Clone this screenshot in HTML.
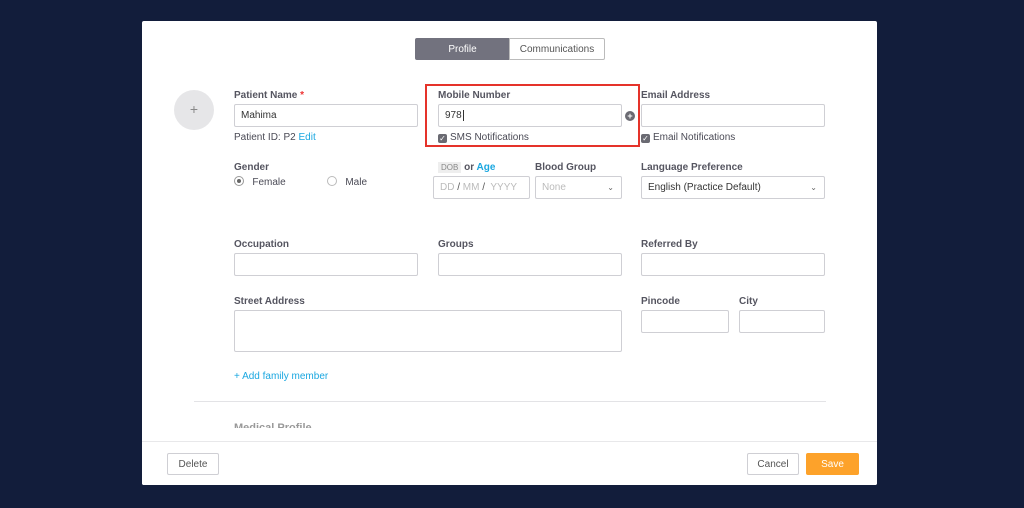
<!DOCTYPE html>
<html><head><style>
*{box-sizing:border-box;margin:0;padding:0}
body{width:1024px;height:508px;background:#121d3b;font-family:"Liberation Sans",sans-serif;position:relative;overflow:hidden;color:#4a4a55}
.m{position:absolute;left:142px;top:21px;width:735px;height:464px;background:#fff;border-radius:2px;overflow:hidden}
.a{position:absolute}
.l{position:absolute;font-size:10px;font-weight:bold;color:#555560}
.i{position:absolute;border:1px solid #cfcfd4;border-radius:2px;height:23px;background:#fff;font-size:10px;padding:0 6px;line-height:21px;color:#333}
.t{position:absolute;font-size:10px;color:#4a4a55}
.cb{display:inline-block;width:9px;height:9px;background:#6a6a72;border-radius:2px;vertical-align:-1px;margin-right:3px;color:#fff;font-size:8px;line-height:9px;text-align:center}
.blue{color:#1aa7e0}
.btn{position:absolute;border:1px solid #cfcfd4;border-radius:2px;font-size:10px;color:#555;display:flex;align-items:center;justify-content:center;background:#fff}
.ph{color:#bbb}
</style></head><body>
<div class="m">
<div class="a" style="left:273px;top:17px;width:95px;height:22px;background:#72727e;color:#fff;font-size:10px;display:flex;align-items:center;justify-content:center;border-radius:2px 0 0 2px">Profile</div>
<div class="a" style="left:367px;top:17px;width:96px;height:22px;border:1px solid #bbb;color:#555;font-size:10px;display:flex;align-items:center;justify-content:center;border-radius:0 2px 2px 0">Communications</div>

<div class="a" style="left:32px;top:69px;width:40px;height:40px;border-radius:50%;background:#e6e6e8;color:#888;font-size:14px;text-align:center;line-height:38px">+</div>

<div class="l" style="left:92px;top:69px">Patient Name <span style="color:#e33">*</span></div>
<div class="i" style="left:92px;top:83px;width:184px">Mahima</div>
<div class="t" style="left:92px;top:111px">Patient ID: P2 <span class="blue">Edit</span></div>

<div class="a" style="left:283px;top:63px;width:215px;height:63px;border:2px solid #e5332a"></div>
<div class="l" style="left:296px;top:69px">Mobile Number</div>
<div class="i" style="left:296px;top:83px;width:184px">978<span style="border-left:1px solid #333;margin-left:1px"></span></div>
<div class="a" style="left:483px;top:90px;width:10px;height:10px;border-radius:50%;background:#6a6a72;color:#fff;font-size:9px;line-height:10px;text-align:center;font-weight:bold">+</div>
<div class="t" style="left:296px;top:111px"><span class="cb">✓</span>SMS Notifications</div>

<div class="l" style="left:499px;top:69px">Email Address</div>
<div class="i" style="left:499px;top:83px;width:184px"></div>
<div class="t" style="left:499px;top:111px"><span class="cb">✓</span>Email Notifications</div>

<div class="l" style="left:92px;top:141px">Gender</div>
<div class="t" style="left:92px;top:155px"><span style="display:inline-block;width:10px;height:10px;border:1px solid #999;border-radius:50%;vertical-align:-1px;position:relative"><span style="position:absolute;left:2px;top:2px;width:4px;height:4px;border-radius:50%;background:#666"></span></span>&nbsp;&nbsp;&nbsp;Female</div>
<div class="t" style="left:185px;top:155px"><span style="display:inline-block;width:10px;height:10px;border:1px solid #bbb;border-radius:50%;vertical-align:-1px"></span>&nbsp;&nbsp;&nbsp;Male</div>

<div class="l" style="left:296px;top:141px"><span style="background:#eee;color:#888;font-weight:normal;font-size:8px;padding:1px 3px">DOB</span> or <span class="blue">Age</span></div>
<div class="i ph" style="left:291px;top:155px;width:97px">DD <span style="color:#555">/</span> MM <span style="color:#555">/</span>&nbsp; YYYY</div>
<div class="l" style="left:393px;top:141px">Blood Group</div>
<div class="i ph" style="left:393px;top:155px;width:87px">None<span style="position:absolute;right:7px;color:#666;font-size:8px">⌄</span></div>

<div class="l" style="left:499px;top:141px">Language Preference</div>
<div class="i" style="left:499px;top:155px;width:184px">English (Practice Default)<span style="position:absolute;right:7px;color:#666;font-size:8px">⌄</span></div>

<div class="l" style="left:92px;top:218px">Occupation</div>
<div class="i" style="left:92px;top:232px;width:184px"></div>
<div class="l" style="left:296px;top:218px">Groups</div>
<div class="i" style="left:296px;top:232px;width:184px"></div>
<div class="l" style="left:499px;top:218px">Referred By</div>
<div class="i" style="left:499px;top:232px;width:184px"></div>

<div class="l" style="left:92px;top:275px">Street Address</div>
<div class="i" style="left:92px;top:289px;width:388px;height:42px"></div>
<div class="l" style="left:499px;top:275px">Pincode</div>
<div class="i" style="left:499px;top:289px;width:88px"></div>
<div class="l" style="left:597px;top:275px">City</div>
<div class="i" style="left:597px;top:289px;width:86px"></div>

<div class="t blue" style="left:92px;top:350px">+ Add family member</div>
<div class="a" style="left:52px;top:380px;width:632px;height:1px;background:#e3e3e6"></div>
<div class="a" style="left:92px;top:401px;width:200px;height:6px;overflow:hidden"><div class="l" style="top:0;left:0;font-size:11px;color:#999">Medical Profile</div></div>
<div class="a" style="left:0;top:420px;width:735px;height:44px;background:#fff;border-top:1px solid #e8e8ea"></div>

<div class="btn" style="left:25px;top:432px;width:52px;height:22px">Delete</div>
<div class="btn" style="left:605px;top:432px;width:52px;height:22px">Cancel</div>
<div class="btn" style="left:664px;top:432px;width:53px;height:22px;background:#fda22a;border:none;color:#fff">Save</div>
</div>
</body></html>
